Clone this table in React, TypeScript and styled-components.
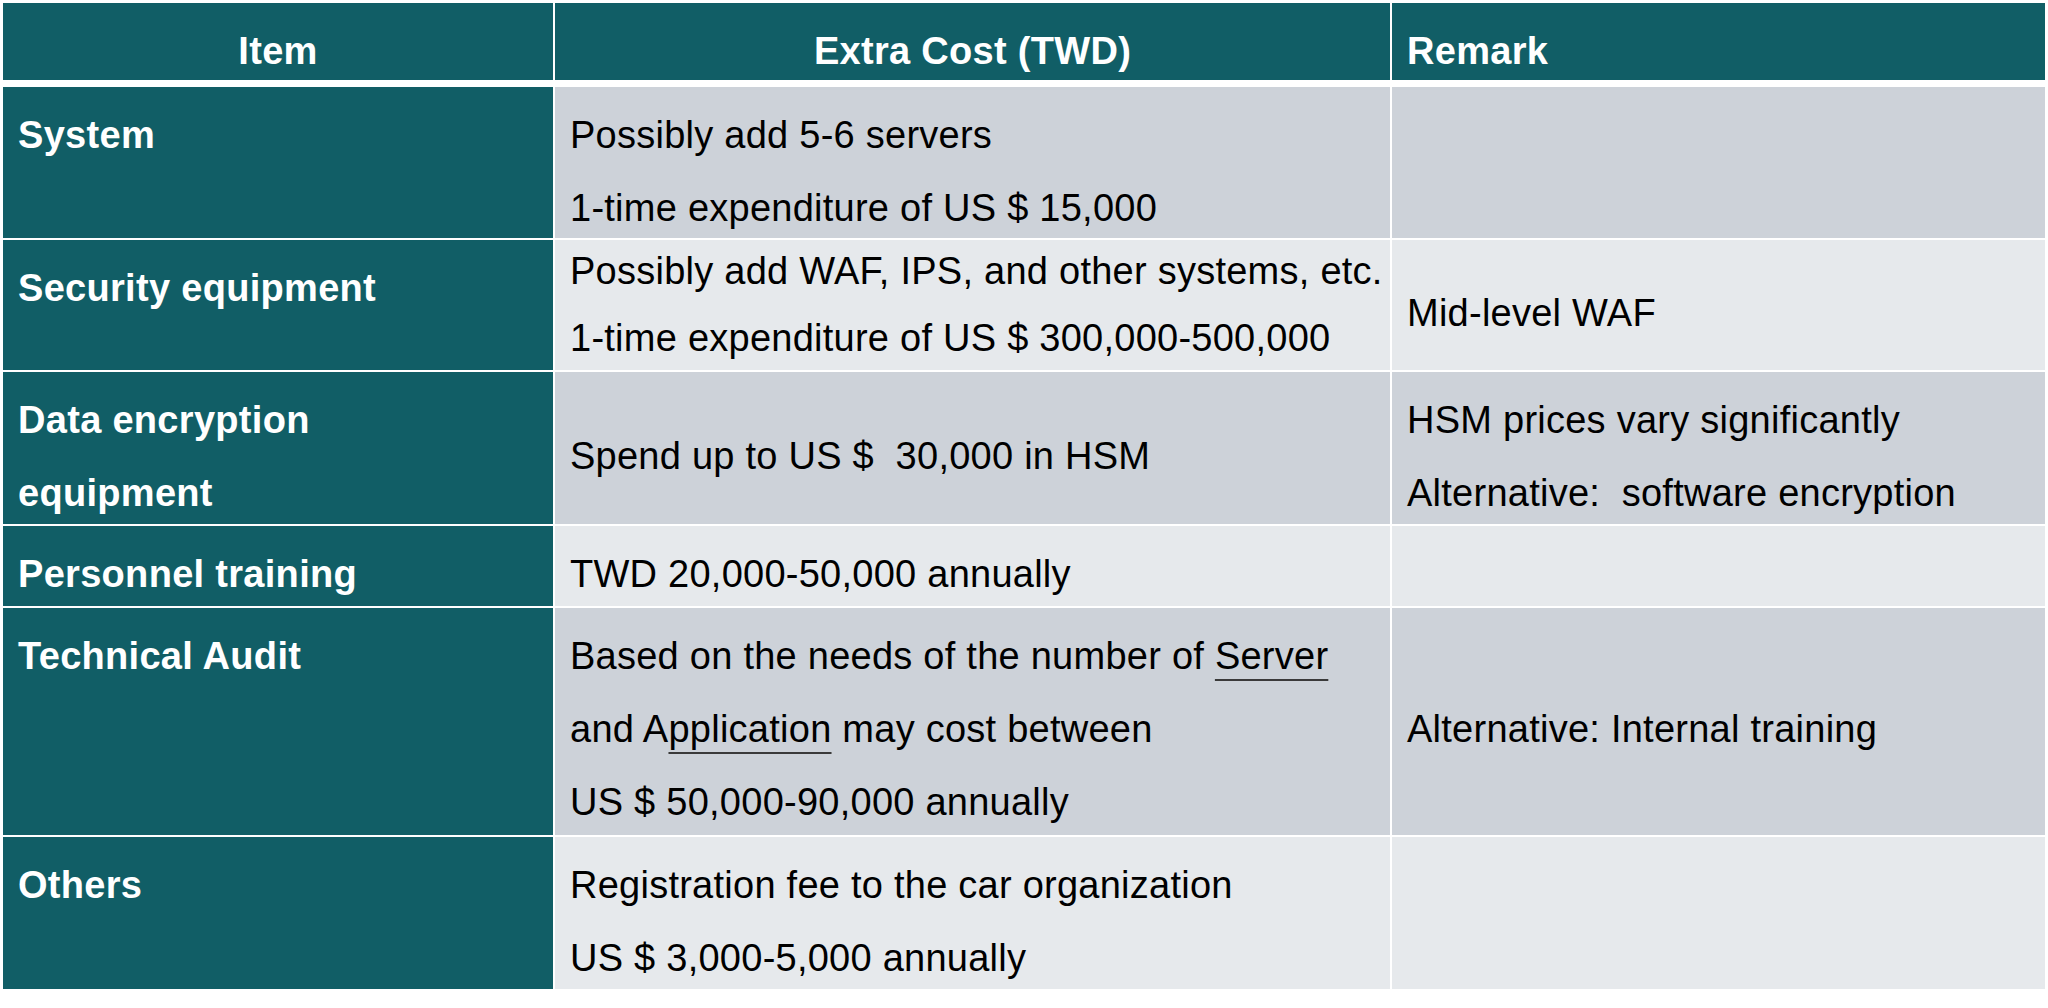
import React from 'react';
import styled, { createGlobalStyle, css } from 'styled-components';

const GlobalStyle = createGlobalStyle`
  html, body {
    margin: 0;
    padding: 0;
    background: #ffffff;
  }
  body {
    font-family: "Liberation Sans", Arial, sans-serif;
  }
`;

const TEAL = '#115e66';
const DARK = '#cdd2d9';
const LIGHT = '#e6e9ec';
const COLS = '550px 835px 653px';

const Page = styled.div`
  width: 2048px;
  height: 1008px;
  box-sizing: border-box;
  padding: 3px 0 0 3px;
  background: #ffffff;
`;

const Table = styled.div`
  display: flex;
  flex-direction: column;
  width: 2042px;
`;

const HeaderRow = styled.div`
  display: grid;
  grid-template-columns: ${COLS};
  column-gap: 2px;
  height: 77px;
  margin-bottom: 7px;
`;

const Body = styled.div`
  display: flex;
  flex-direction: column;
  gap: 2px;
`;

const Row = styled.div<{ $h: number }>`
  display: grid;
  grid-template-columns: ${COLS};
  column-gap: 2px;
  height: ${(p) => p.$h}px;
`;

const HeadCell = styled.div<{ $align: 'center' | 'left' }>`
  background: ${TEAL};
  color: #ffffff;
  font-weight: 700;
  font-size: 38px;
  letter-spacing: 0.3px;
  line-height: 73px;
  padding: 12px 15px 0;
  text-align: ${(p) => p.$align};
  white-space: nowrap;
  overflow: hidden;
`;

const ItemCell = styled.div`
  background: ${TEAL};
  color: #ffffff;
  font-weight: 700;
  font-size: 38px;
  letter-spacing: 0.3px;
  line-height: 73px;
  padding: 12px 15px 0;
  white-space: nowrap;
  overflow: hidden;
`;

type VAlign = 'top' | 'middle' | 'tight';

const Cell = styled.div<{ $shade: 'dark' | 'light'; $valign?: VAlign }>`
  background: ${(p) => (p.$shade === 'dark' ? DARK : LIGHT)};
  color: #000000;
  font-size: 38px;
  letter-spacing: 0.25px;
  display: flex;
  flex-direction: column;
  padding: 0 15px;
  overflow: hidden;
  white-space: pre;
  ${(p) =>
    p.$valign === 'middle'
      ? css`
          justify-content: center;
          line-height: 73px;
          padding-top: 16px;
        `
      : p.$valign === 'tight'
      ? css`
          justify-content: center;
          line-height: 67.5px;
        `
      : css`
          justify-content: flex-start;
          line-height: 73px;
          padding-top: 12px;
        `}
`;

const Line = styled.div`
  white-space: pre;
`;

const Under = styled.span`
  text-decoration: underline;
  text-decoration-thickness: 2px;
  text-underline-offset: 10px;
  text-decoration-color: #3a3a3a;
`;

export default function App() {
  return (
    <>
      <GlobalStyle />
      <Page>
        <Table>
          <HeaderRow>
            <HeadCell $align="center">Item</HeadCell>
            <HeadCell $align="center">Extra Cost (TWD)</HeadCell>
            <HeadCell $align="left">Remark</HeadCell>
          </HeaderRow>
          <Body>
            <Row $h={151}>
              <ItemCell>System</ItemCell>
              <Cell $shade="dark">
                <Line>Possibly add 5-6 servers</Line>
                <Line>1-time expenditure of US $ 15,000</Line>
              </Cell>
              <Cell $shade="dark" />
            </Row>
            <Row $h={130}>
              <ItemCell>Security equipment</ItemCell>
              <Cell $shade="light" $valign="tight">
                <Line>Possibly add WAF, IPS, and other systems, etc.</Line>
                <Line>1-time expenditure of US $ 300,000-500,000</Line>
              </Cell>
              <Cell $shade="light" $valign="middle">
                <Line>Mid-level WAF</Line>
              </Cell>
            </Row>
            <Row $h={152}>
              <ItemCell>
                <Line>Data encryption</Line>
                <Line>equipment</Line>
              </ItemCell>
              <Cell $shade="dark" $valign="middle">
                <Line>{'Spend up to US $  30,000 in HSM'}</Line>
              </Cell>
              <Cell $shade="dark">
                <Line>HSM prices vary significantly</Line>
                <Line>{'Alternative:  software encryption'}</Line>
              </Cell>
            </Row>
            <Row $h={80}>
              <ItemCell>Personnel training</ItemCell>
              <Cell $shade="light">
                <Line>TWD 20,000-50,000 annually</Line>
              </Cell>
              <Cell $shade="light" />
            </Row>
            <Row $h={227}>
              <ItemCell>Technical Audit</ItemCell>
              <Cell $shade="dark">
                <Line>
                  Based on the needs of the number of <Under>Server</Under>
                </Line>
                <Line>
                  and A<Under>pplication</Under> may cost between
                </Line>
                <Line>US $ 50,000-90,000 annually</Line>
              </Cell>
              <Cell $shade="dark" $valign="middle">
                <Line>Alternative: Internal training</Line>
              </Cell>
            </Row>
            <Row $h={152}>
              <ItemCell>Others</ItemCell>
              <Cell $shade="light">
                <Line>Registration fee to the car organization</Line>
                <Line>US $ 3,000-5,000 annually</Line>
              </Cell>
              <Cell $shade="light" />
            </Row>
          </Body>
        </Table>
      </Page>
    </>
  );
}
